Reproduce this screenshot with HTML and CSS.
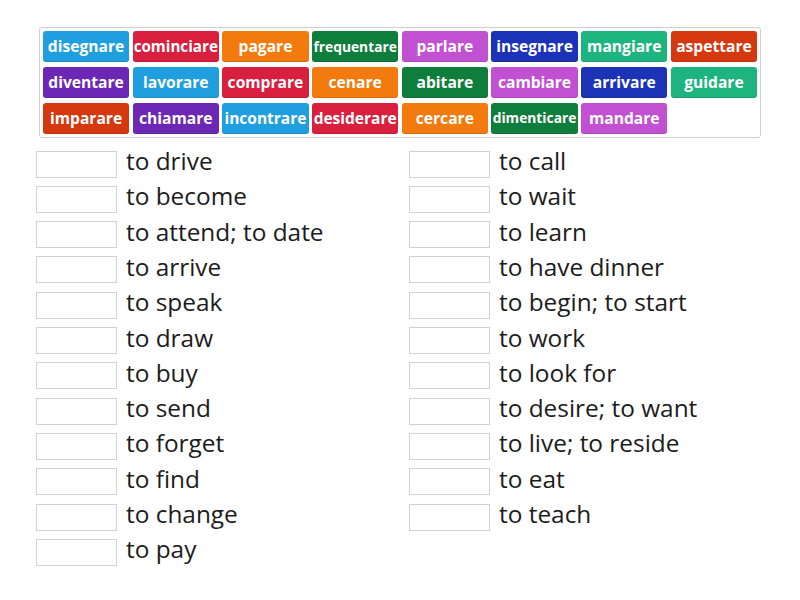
FILE: index.html
```html
<!DOCTYPE html>
<html lang="en">
<head>
<meta charset="utf-8">
<title>Match up</title>
<link rel="stylesheet" href="styles.css">
</head>
<body>
<div class="board">
  <div class="tile blue">disegnare</div>
  <div class="tile red fit1">cominciare</div>
  <div class="tile orange">pagare</div>
  <div class="tile green fit2">frequentare</div>
  <div class="tile magenta">parlare</div>
  <div class="tile navy">insegnare</div>
  <div class="tile teal">mangiare</div>
  <div class="tile rust">aspettare</div>

  <div class="tile purple">diventare</div>
  <div class="tile blue">lavorare</div>
  <div class="tile red">comprare</div>
  <div class="tile orange">cenare</div>
  <div class="tile green">abitare</div>
  <div class="tile magenta">cambiare</div>
  <div class="tile navy">arrivare</div>
  <div class="tile teal">guidare</div>

  <div class="tile rust">imparare</div>
  <div class="tile purple">chiamare</div>
  <div class="tile blue fit3">incontrare</div>
  <div class="tile red fit3">desiderare</div>
  <div class="tile orange">cercare</div>
  <div class="tile green fit2">dimenticare</div>
  <div class="tile magenta">mandare</div>
</div>

<div class="lists">
  <div class="col">
    <div class="row"><span class="slot"></span><span class="label">to drive</span></div>
    <div class="row"><span class="slot"></span><span class="label">to become</span></div>
    <div class="row"><span class="slot"></span><span class="label">to attend; to date</span></div>
    <div class="row"><span class="slot"></span><span class="label">to arrive</span></div>
    <div class="row"><span class="slot"></span><span class="label">to speak</span></div>
    <div class="row"><span class="slot"></span><span class="label">to draw</span></div>
    <div class="row"><span class="slot"></span><span class="label">to buy</span></div>
    <div class="row"><span class="slot"></span><span class="label">to send</span></div>
    <div class="row"><span class="slot"></span><span class="label">to forget</span></div>
    <div class="row"><span class="slot"></span><span class="label">to find</span></div>
    <div class="row"><span class="slot"></span><span class="label">to change</span></div>
    <div class="row"><span class="slot"></span><span class="label">to pay</span></div>
  </div>
  <div class="col">
    <div class="row"><span class="slot"></span><span class="label">to call</span></div>
    <div class="row"><span class="slot"></span><span class="label">to wait</span></div>
    <div class="row"><span class="slot"></span><span class="label">to learn</span></div>
    <div class="row"><span class="slot"></span><span class="label">to have dinner</span></div>
    <div class="row"><span class="slot"></span><span class="label">to begin; to start</span></div>
    <div class="row"><span class="slot"></span><span class="label">to work</span></div>
    <div class="row"><span class="slot"></span><span class="label">to look for</span></div>
    <div class="row"><span class="slot"></span><span class="label">to desire; to want</span></div>
    <div class="row"><span class="slot"></span><span class="label">to live; to reside</span></div>
    <div class="row"><span class="slot"></span><span class="label">to eat</span></div>
    <div class="row"><span class="slot"></span><span class="label">to teach</span></div>
  </div>
</div>
</body>
</html>
```

FILE: styles.css
```css
* { box-sizing: border-box; }

body {
  margin: 0;
  background: #ffffff;
  font-family: "Open Sans", "Noto Sans", "DejaVu Sans", sans-serif;
  color: #1c1c1c;
}

.board {
  margin: 27px 0 0 39px;
  width: 722px;
  border: 1px solid #cfcfcf;
  border-radius: 3px;
  padding: 3px 3px 3px 3px;
  display: grid;
  grid-template-columns: repeat(8, 1fr);
  grid-auto-rows: 31px;
  column-gap: 3.6px;
  row-gap: 4.8px;
}

.tile {
  display: flex;
  align-items: center;
  justify-content: center;
  border-radius: 3px;
  color: #ffffff;
  font-weight: 700;
  font-size: 15.6px;
  padding-bottom: 1px;
  white-space: nowrap;
  overflow: hidden;
  box-shadow: inset 0 -1px 0 rgba(0, 0, 0, 0.12);
}

.fit1 { font-size: 15.2px; }
.fit2 { font-size: 13.8px; }
.fit3 { font-size: 15.5px; }

.blue    { background: #1f9fe0; }
.red     { background: #d81f3e; }
.orange  { background: #f37a0d; }
.green   { background: #0f7e3d; }
.magenta { background: #c150d2; }
.navy    { background: #1c33b7; }
.teal    { background: #1db480; }
.rust    { background: #d5380f; }
.purple  { background: #6c28b4; }

.lists {
  margin: 13px 0 0 36px;
  display: grid;
  grid-template-columns: 373px 373px;
}

.col {
  display: flex;
  flex-direction: column;
  gap: 8.3px;
}

.row {
  display: flex;
  align-items: flex-start;
  gap: 9px;
  height: 27px;
}

.slot {
  flex: none;
  width: 81px;
  height: 27px;
  border: 1px solid #d2d2d2;
  background: #ffffff;
}

.label {
  font-size: 24.4px;
  line-height: 27px;
  margin-top: -3.5px;
  white-space: nowrap;
}
```
